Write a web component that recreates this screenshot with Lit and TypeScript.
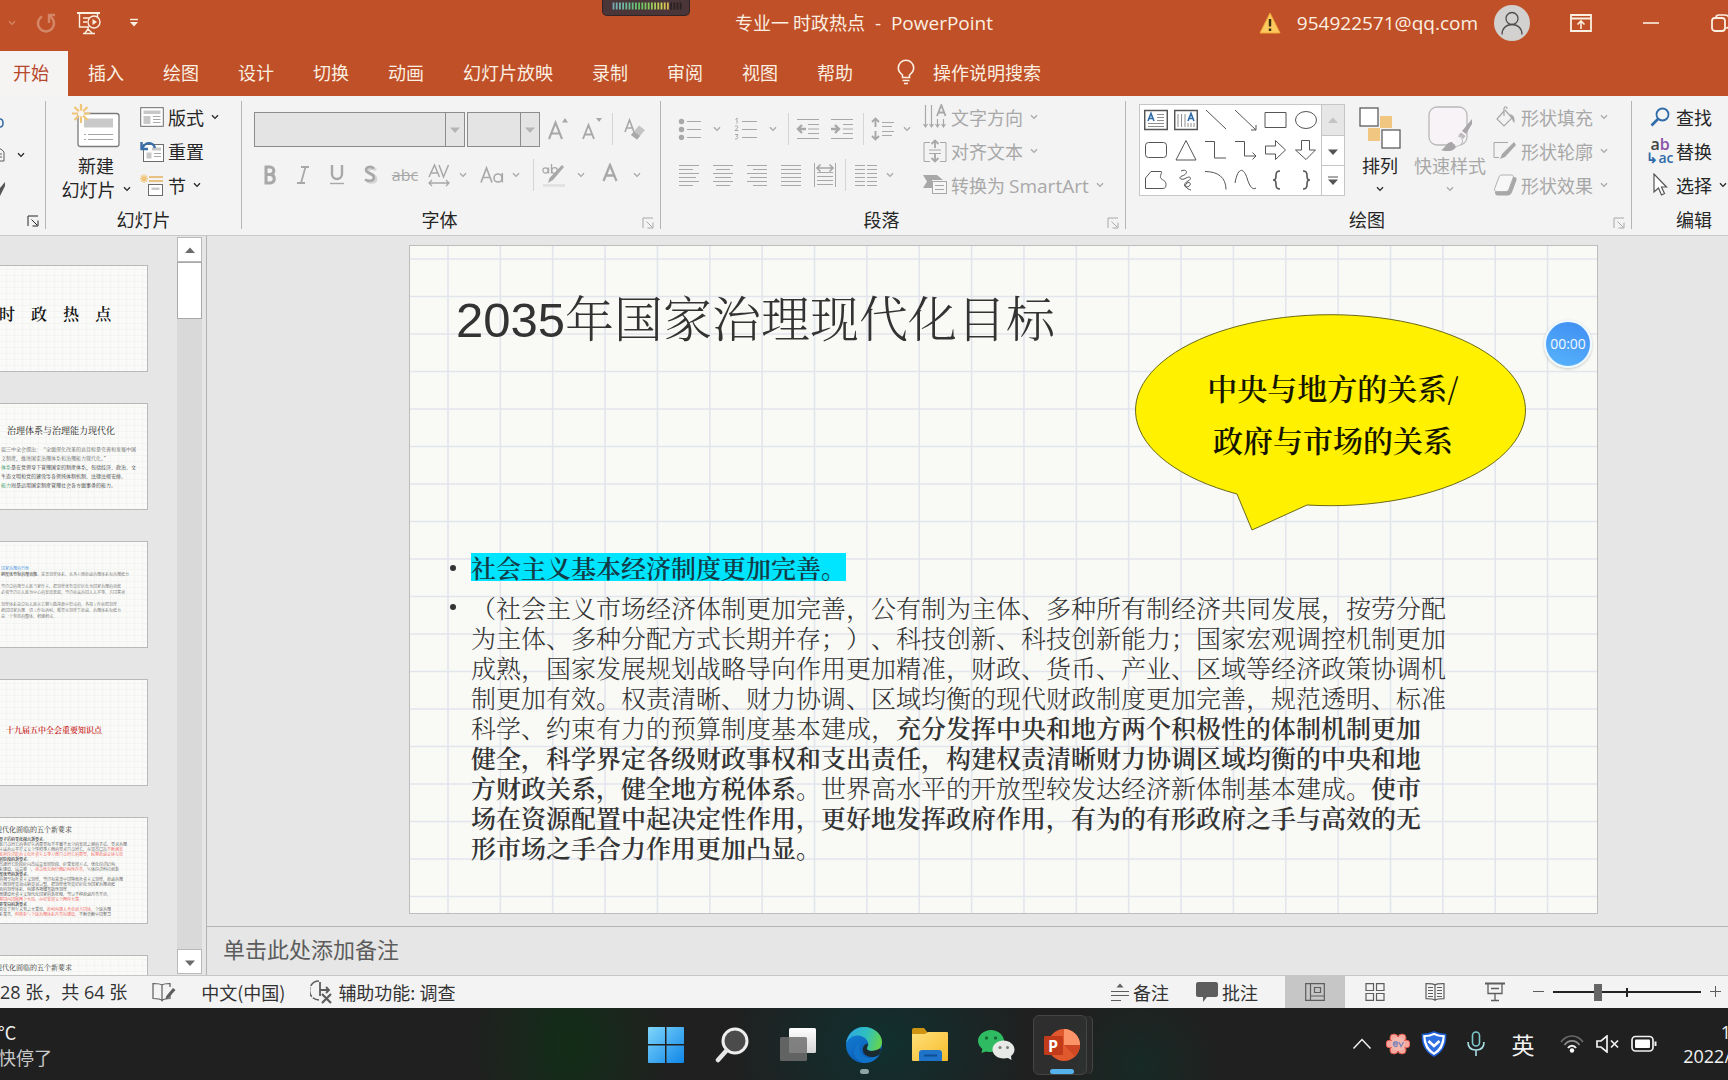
import { LitElement, html, svg, css, nothing, TemplateResult } from "lit";
import { customElement, state } from "lit/decorators.js";

type Pic = TemplateResult;

const pic = (w: number, h: number, body: unknown, cls = ""): Pic =>
  html`<svg class=${cls} width=${w} height=${h} viewBox="0 0 ${w} ${h}" fill="none" stroke="currentColor" aria-hidden="true">${body}</svg>`;

const chevron = pic(8, 6, svg`<path d="M1 1.200 4 4.400 7 1.200" stroke-width="1.300"/>`, "chev");

const launcherIcon = pic(12, 12, svg`<path d="M1 11V1h10M4.500 4.500 10 10M11 5.500V11H5.500"/>`);

/* horizontal rules of a paragraph icon: [x1, x2] for each line */
const lines = (rows: number[][], y0 = 1, step = 4) =>
  rows.map(([a, b], i) => svg`<path d="M${a} ${y0 + i * step + 0.5}H${b}"/>`);

const I = {
  redo: pic(20, 22, svg`<path d="M6 4.500A8 8 0 1 0 14 4.500M13 11V3H19" stroke-width="2.400"/>`),
  present: pic(26, 24, svg`<path d="M1 2h23" stroke-width="2"/><path d="M3.500 3v13H13M7 7h6M7 11h4M12 16v3M7 22.500h12M9 22l3-4 4 4M21.500 3v3" stroke-width="1.400"/><circle cx="18" cy="11" r="6" stroke-width="1.400"/><path d="M16.500 8v6l4.500-3z" fill="currentColor" stroke="none"/>`),
  more: pic(10, 9, svg`<path d="M1 1.500h8" stroke-width="1.400"/><path d="M1 4h8L5 8.500z" fill="currentColor" stroke="none"/>`),
  bulb: pic(20, 26, svg`<path d="M6.500 18.500v-2.500C4 14 2.300 12 2.300 9a7.700 7.700 0 0 1 15.400 0c0 3-1.700 5-4.200 7v2.500zM6.500 21.500h7M8 24.500h4" stroke-width="1.600"/>`),
  warn: pic(22, 22, svg`<path d="M11 1 21 21H1z" fill="#fbc95d" stroke="#f2a83a"/><path d="M11 7v7.500M11 16.500v2.500" stroke="#3d2a10" stroke-width="2.400"/>`),
  avatar: pic(36, 36, svg`<circle cx="18" cy="18" r="18" fill="#d3d1cf" stroke="none"/><circle cx="18" cy="13.500" r="6" stroke="#4d4d4d" stroke-width="1.300"/><path d="M8 29.500c0-6 4-10 10-10s10 4 10 10" stroke="#4d4d4d" stroke-width="1.300"/>`),
  ribbonOpt: pic(22, 18, svg`<path d="M1 1h20v16H1zM1 4.500h20" stroke-width="1.800"/><path d="M11 15V7.500M7.500 10.500 11 7l3.500 3.500" stroke-width="1.600"/>`),
  minimize: pic(16, 4, svg`<path d="M0 2h16" stroke-width="1.600"/>`),
  restore: pic(20, 18, svg`<rect x="1" y="4" width="13" height="13" rx="3" stroke-width="1.800"/><path d="M5 3.500C5 2 6 1 8 1h6c3 0 4 1 4 4v6c0 2-1 3-3 3" stroke-width="1.600"/>`),

  newSlide: pic(48, 44, svg`<rect x="6" y="9.500" width="41" height="33" rx="2.500" fill="#fff" stroke="#7b7b7b" stroke-width="1.300"/><path d="M12 14.500h29v9H12z" fill="#c9c9c9" stroke="none"/><path d="M12 30.500h2M16 30.500h25M12 35.500h2M16 35.500h25" stroke="#a5a5a5"/><path d="M9 0v19M0 9.500h18M2.500 3l13 13M15.500 3l-13 13" stroke="#f0c578" stroke-width="2.200"/><circle cx="9" cy="9.500" r="3" fill="#f6f6f6" stroke="none"/>`),
  layout: pic(24, 20, svg`<rect x=".7" y=".7" width="22.600" height="18.600" fill="#fff" stroke="#6c6c6c"/><path d="M3.500 3.500h17v3.500h-17zM3.500 9h7v8h-7z" fill="#c8c8c8" stroke="none"/><path d="M13 9.500h7.500M13 12.500h7.500M13 15.500h7.500" stroke="#a8a8a8"/>`),
  reset: pic(24, 22, svg`<rect x="3.500" y="4.500" width="20" height="17" fill="#fff" stroke="#6c6c6c"/><path d="M12 7.500h9v3h-9zM6.500 12.500h5v6h-5z" fill="#c8c8c8" stroke="none"/><path d="M14 13.500h7M14 16.500h7" stroke="#a8a8a8"/><path d="M15 8C13 2 6 1 2.500 8M1.500 2v7h6.500" stroke="#3a6ea8" stroke-width="2.400"/>`),
  section: pic(24, 22, svg`<path d="M4 0v9M0 4.500h8M1 1.500l6 6M7 1.500l-6 6" stroke="#f0c578" stroke-width="1.300"/><path d="M9 3h14M9 7h14" stroke="#e3b35c" stroke-width="1.500"/><rect x="8.500" y="10.500" width="14" height="11" fill="#fff" stroke="#6c6c6c"/><path d="M11.500 13.500h8v2.500h-8z" fill="#c8c8c8" stroke="none"/>`),

  grow: pic(20, 22, svg`<path d="M1 21 7.500 4.500 14 21M3.500 15.500h8" stroke-width="2.100"/><path d="M14 4.500h6L17 0z" fill="currentColor" stroke="none"/>`),
  shrink: pic(20, 22, svg`<path d="M1 21 6.500 7 12 21M3 16.500h7" stroke-width="1.900"/><path d="M14 0h6l-3 4z" fill="currentColor" stroke="none"/>`),
  eraser: pic(22, 22, svg`<path d="M1 14 5.500 2 10 14M2.500 10h6" stroke-width="1.600"/><path d="M15 7.500 21 12l-8 9.500-6-4.500z" fill="#c4c4c4" stroke="none"/><path d="M10 13.500l6 4.500-3 3.500-6-4.500z" fill="currentColor" stroke="none"/>`),
  bold: pic(14, 20, svg`<path d="M3 2v16h4.500a4.500 4.300 0 0 0 0-8.500H3h4a3.800 3.700 0 0 0 0-7.500z" stroke-width="3"/>`),
  italic: pic(14, 18, svg`<path d="M5 1h8M1 17h8M9.500 1 5 17" stroke-width="1.800"/>`),
  under: pic(16, 20, svg`<path d="M3 0v9a5 5 0 0 0 10 0V0" stroke-width="2.400"/><path d="M1 18.500h14" stroke-width="1.400"/>`),
  shadow: pic(18, 20, svg`<path d="M14 5c-3-2.500-8-2-8 1.500 0 4 8 2.500 8 7.500 0 4-6 4-9 2" stroke="#d6d6d6" stroke-width="3"/><path d="M12 3.500C9 1 4 1.500 4 5c0 4 8 2.500 8 7.500 0 4-6 4-9 2" stroke-width="2.600"/>`),
  spacing: pic(24, 24, svg`<path d="M2 14 7.500 2 12.500 14M4 10h7M12 2l4.500 12L21.500 2" stroke-width="1.500"/><path d="M2 20h20M5 17l-3 3 3 3M19 17l3 3-3 3" stroke-width="1.300"/>`),
  caseIcon: pic(24, 18, svg`<path d="M1 16.500 6.500 2 12 16.500M3 11.500h7" stroke-width="1.700"/><circle cx="18" cy="12" r="4" stroke-width="1.600"/><path d="M22.300 7v9.500" stroke-width="1.600"/>`),
  highlight: pic(24, 26, svg`<circle cx="3.500" cy="8.500" r="2.600" stroke-width="1.200"/><path d="M6.500 5.500v6M9.500 2v9.500" stroke-width="1.300"/><circle cx="12.500" cy="8.500" r="2.800" stroke-width="1.200"/><path d="M22 5 11 18l-5 3 1.500-5L20 3z" fill="currentColor" stroke="none"/><path d="M1 23.500h22" stroke="#e2e2e2" stroke-width="3"/>`),
  fontColor: pic(24, 24, svg`<path d="M5.500 18 12 2l6.500 16M8 12.500h8" stroke-width="2.300"/>`),

  bullets: pic(24, 22, svg`<path d="M9 3.500h14M9 11.500h14M9 19.500h14"/><g fill="currentColor" stroke="none"><circle cx="3.500" cy="3.500" r="2.700"/><circle cx="3.500" cy="11.500" r="2.700"/><circle cx="3.500" cy="19.500" r="2.700"/></g>`),
  numbers: pic(24, 24, svg`<path d="M8 4.500h15M8 12.500h15M8 20.500h15"/><path d="M1.500 2.500 3 1v5.500M1 9.500c2-1.500 3.500 0 2.500 1.500L1 13.500h3.500M1 17.500h3L2.500 19.500c2 0 2 3-1.500 2.500" />`),
  outdent: pic(24, 22, svg`<path d="M1 1.500h22M12 6.500h11M12 11h11M12 15.500h11M1 20.500h22"/><path d="M2 11h8M6 7l-4 4 4 4" stroke-width="2.400"/>`),
  indent: pic(24, 22, svg`<path d="M1 1.500h22M13 6.500h10M13 11h10M13 15.500h10M1 20.500h22"/><path d="M1 11h8M5 7l4 4-4 4" stroke-width="2.400"/>`),
  lineGap: pic(24, 24, svg`<path d="M11 5.500h12M11 9.500h10M11 14.500h12M11 18.500h10"/><path d="M4.500 1.500v8.500M1 5l3.500-3.500L8 5M4.500 22.500V14M1 19l3.500 3.500L8 19" stroke-width="1.900"/>`),
  alignL: pic(22, 22, lines([[1, 21], [1, 15], [1, 21], [1, 18], [1, 21], [1, 15]])),
  alignC: pic(22, 22, lines([[1, 21], [4, 18], [1, 21], [3, 19], [1, 21], [4, 18]])),
  alignR: pic(22, 22, lines([[1, 21], [7, 21], [1, 21], [4, 21], [1, 21], [7, 21]])),
  alignJ: pic(22, 22, lines([[1, 21], [1, 21], [1, 21], [1, 21], [1, 21], [1, 21]])),
  spread: pic(24, 24, svg`${lines([[4, 20], [4, 20], [4, 20], [4, 20]], 9)}<path d="M1.500 0v24M22.500 0v24"/><path d="M4 5h16M7.500 1.500 4 5l3.500 3.500M16.500 1.500 20 5l-3.500 3.500" stroke-width="1.700"/>`),
  columns: pic(24, 22, svg`${lines([[1, 11], [1, 11], [1, 11], [1, 11], [1, 11], [1, 11]])}${lines([[13, 23], [13, 23], [13, 23], [13, 23], [13, 23], [13, 23]])}`),
  textDir: pic(24, 26, svg`<path d="M2.500 1v22M8.500 1v22M14.500 15v8M20.500 15v8M.500 20l2 3 2-3M6.500 20l2 3 2-3M12.500 20l2 3 2-3M18.500 20l2 3 2-3" stroke-width="1.200"/><path d="M14 12l4.300-11L22.500 12M15.500 8.500h5.500" stroke-width="1.800"/>`),
  textAlign: pic(24, 24, svg`<path d="M7 3.500H1v19h6M17 3.500h6v19h-6M6 11h12M6 14.500h12"/><path d="M12 9V1.500M8.500 5 12 1.500 15.500 5M12 15v7.500M8.500 19l3.500 3.500 3.500-3.500" stroke-width="1.800"/>`),
  smartArt: pic(24, 20, svg`<path d="M0 0h14l6 5H9v8H0l4-6.500z" fill="currentColor" stroke="none"/><rect x="9.500" y="6.500" width="14" height="12" fill="#f5f5f5"/><path d="M12 10.500h9M12 14.500h9"/>`),

  arrange: pic(42, 42, svg`<path d="M21 9h12v12H21zM9 21h12v13H9z" fill="#f0c680" stroke="none"/><rect x="1" y="1" width="18" height="18" fill="#fff" stroke="#5d5d5d" stroke-width="1.300"/><rect x="23" y="23" width="18" height="18" fill="#fff" stroke="#5d5d5d" stroke-width="1.300"/>`),
  quick: pic(46, 46, svg`<rect x="2" y="2" width="38" height="38" rx="8" fill="#f7f3f7" stroke="#b9b9b9" stroke-width="1.300"/><path d="M45 14 35 26l4 3 6-10z" fill="#a9a6a9" stroke="none"/><path d="M34 27.500l4.500 3.500-2 3-5-4z" fill="#bdbabd" stroke="none"/><path d="M31 31c3 1 5 3 4.500 6-2 4-6 5-8 4" fill="#f3f3f3" stroke="#bdbabd"/><path d="M14 45c4-1 5-8 11-8l4 5c-3 5-10 5-15 3z" fill="#a9a6a9" stroke="none"/>`),
  fill: pic(24, 22, svg`<path d="M11 5 4 13l7 7 8-8-7-8M11 10V3c0-3 3-3 3 0" stroke-width="1.200"/><path d="M17 8c4 1 5 4 4.500 9-2-1-2-4-3.500-6z" fill="currentColor" stroke="none"/>`),
  outline: pic(24, 20, svg`<path d="M15 1.500H1v15h5"/><path d="M21 1 9 13l-2 5 5-2L23 4z" fill="currentColor" stroke="none"/>`),
  effect: pic(24, 22, svg`<path d="M9 3h12c2 0 3 1 2.500 3l-4 11c-1 3-3 4.500-5 4.500H5c-2 0-3-1-3-3z" fill="#a8a8a8" stroke="none"/><path d="M9 1h9c2 0 3 1 2 3l-4 11c-.500 1.500-1.500 2.500-3 2.500H4c-2 0-3-1-2.300-3L6 3c.500-1.300 1.500-2 3-2z" fill="#f7f7f7" stroke="#b1b1b1"/>`),
  find: pic(20, 20, svg`<circle cx="12.500" cy="7.500" r="6" stroke="#2f6ba8" stroke-width="1.800"/><path d="M8.500 11.500 1.500 18.500" stroke="#2f6ba8" stroke-width="2.600"/>`),
  replace: html`<span class="replace" aria-hidden="true"><span>a<i>b</i></span><span class="second">↳ac</span></span>`,
  select: pic(16, 24, svg`<path d="M2 1v18l4.500-4 3 7 3-1.500-3-6.500h5z" fill="#fff" stroke="#555" stroke-width="1.200"/>`),

  cut: pic(4, 10, svg`<path d="M0 1c2 0 3 2 3 4S2 9 0 9" stroke="#3a6ea8" stroke-width="1.600"/>`),
  copy: pic(5, 14, svg`<path d="M0 1h1l3 3v9H0M0 6h2M0 9h2" stroke="#5d5d5d"/>`),
  brush: pic(6, 16, svg`<path d="M5 0v4L0 14V6z" fill="#555" stroke="none"/>`),

  spell: pic(24, 20, svg`<path d="M10 3C8 1.500 5 1.500 1 1.500v15c4 0 7 0 9 2V3c2-1.500 5-1.500 8-1.500V5M10 18.500c2-2 5-2 8-2V13" stroke-width="1.200"/><path d="M21 6l2.500 2-7 8-3 1.500.8-3.500z" fill="currentColor" stroke="none"/>`),
  access: pic(24, 24, svg`<path d="M9 1A9.500 9.500 0 0 0 9 20" stroke-width="1.600" stroke-dasharray="10 1.500"/><path d="M10 2v8h9M16 7l3 3-3 3M10 10v6" stroke-width="1.800"/><path d="M12 14l9 9M21 14l-9 9" stroke-width="2.200"/>`),
  notes: pic(18, 20, svg`<path d="M5.500 5.500h7L9 1.500z" fill="currentColor" stroke="none"/><path d="M0 9.500h18M0 13.500h18M0 18.500h10" stroke-width="1.200"/>`),
  comment: pic(22, 20, svg`<path d="M2 0h18c1 0 2 1 2 2v11c0 1-1 2-2 2h-9l-4 5v-5H2c-1 0-2-1-2-2V2c0-1 1-2 2-2z" fill="#5d5d5d" stroke="none"/>`),
  viewNormal: pic(20, 18, svg`<path d="M.700.700h18.600v16.600H.700zM5.500 1v16M5.500 13h14M9.500 4.500h6v5h-6z" stroke-width="1.200"/>`),
  viewSorter: pic(20, 18, svg`<path d="M1 .700h7.500v6.800H1zM11.500.700H19v6.800h-7.500zM1 10.500h7.500v6.800H1zM11.500 10.500H19v6.800h-7.500z" stroke-width="1.200"/>`),
  viewRead: pic(20, 18, svg`<path d="M10 2C8 .500 4 .700 1 .700v15c3 0 7 0 9 1.500 2-1.500 6-1.500 9-1.500v-15c-3 0-7-.200-9 1.300zM10 2v15.500M3 4.500h5M3 7.500h5M3 10.500h5M3 13.500h5M12 4.500h5M12 7.500h5M12 10.500h5M12 13.500h5" stroke-width="1.200"/>`),
  viewShow: pic(20, 20, svg`<path d="M0 1.500h20" stroke-width="2"/><path d="M3 2v9.500h14V2M6 6.500h8M10 12v6.500M6 18.500h8" stroke-width="1.300"/>`),

  start: pic(36, 36, svg`<defs><linearGradient id="w" x1="0" y1="0" x2="1" y2="1"><stop stop-color="#7fd6fb"/><stop offset="1" stop-color="#0f86e8"/></linearGradient></defs><path d="M0 1q0-1 1-1h16v17H0zM18.500 0H35q1 0 1 1v16H18.500zM0 18.500h17V36H1q-1 0-1-1zM18.500 18.500H36V35q0 1-1 1H18.500z" fill="url(#w)" stroke="none"/>`),
  search: pic(34, 36, svg`<circle cx="20" cy="14" r="12" fill="#4b4b4b" stroke="#eee" stroke-width="3"/><path d="M11.500 23.500 3 33" stroke="#e6e6e6" stroke-width="4.500" stroke-linecap="round"/>`),
  tasks: pic(36, 34, svg`<defs><linearGradient id="t" x1="0" y1="0" x2="0" y2="1"><stop stop-color="#fff"/><stop offset="1" stop-color="#d4d4d4"/></linearGradient></defs><rect x="9" y="0" width="27" height="25" rx="1.500" fill="url(#t)" stroke="none"/><rect x="0" y="9" width="27" height="24" rx="1.500" fill="#6e6e6e" fill-opacity=".85" stroke="none"/>`),
  edge: pic(36, 36, svg`<defs><linearGradient id="e1" x1="0" y1=".3" x2="1" y2=".5"><stop stop-color="#2fa7e0"/><stop offset=".55" stop-color="#2fc0c0"/><stop offset="1" stop-color="#66d34c"/></linearGradient><linearGradient id="e2" x1="0" y1="0" x2=".6" y2="1"><stop stop-color="#1384d8"/><stop offset="1" stop-color="#0b59b4"/></linearGradient></defs><circle cx="18" cy="18" r="18" fill="url(#e2)" stroke="none"/><path d="M0 17C1 7 9 0 18 0c10 0 18 7 18 15 0 6-4 9-9 9-4 0-6-1-6-2.500S23 19 22 15.500C20 10 15 8.500 11 8.500 6 8.500 2 12 0 17z" fill="url(#e1)" stroke="none"/><path d="M16 14.500c-4 4-3.500 10 1 14 4 3 9 3 16.500-.500C30 33 25 36 18 36 10 34 7 28 8.500 22c1-4 4-6.500 7.500-7.500z" fill="#1173c9" stroke="none"/><path d="M21.500 16.500c1 2.500-1 3.500-.500 5.500 1 3 8 2.500 13-.500 2 0 1 3-1 6-5 4-12 3-15-1-2.500-4-1-9 3.500-10z" fill="#1b2a2e" stroke="none"/>`),
  folder: pic(38, 36, svg`<defs><linearGradient id="f" x1="0" y1="0" x2="1" y2="1"><stop stop-color="#ffe07a"/><stop offset="1" stop-color="#f7bb2b"/></linearGradient></defs><path d="M1 3q0-2 2-2h10l4 5-4 4H1z" fill="#cf9412" stroke="none"/><path d="M1 7h13l3-2h19q1 0 1 1v27q0 1-1 1H2q-1 0-1-1z" fill="url(#f)" stroke="none"/><path d="M8 34V26q0-3 3-3h17q3 0 3 3v8z" fill="#1f74c9" stroke="none"/><path d="M13 28.500h13" stroke="#0f4f95" stroke-width="2"/>`),
  wechat: pic(38, 32, svg`<path d="M14 1c7 0 13 5 13 11s-5 11-13 11c-2 0-3 0-5-.600L4.500 24l.800-4C3 18 1 15 1 12 1 6 7 1 14 1z" fill="#2fbb61" stroke="none"/><path d="M26.500 11.500c6 0 11 4 11 9 0 3-1.500 5-3.500 6.500l.500 4-3.500-2c-9 2-15.500-2.500-15.500-8.500 0-5 5-9 11-9z" fill="#e6e9e6" stroke="none"/><g fill="#176e37" stroke="none"><circle cx="9.500" cy="9" r="1.700"/><circle cx="18.500" cy="9" r="1.700"/></g><g fill="#757a76" stroke="none"><circle cx="23" cy="18.500" r="1.500"/><circle cx="30.500" cy="18.500" r="1.500"/></g>`),
  ppt: html`<span class="ppt">${pic(36, 34, svg`<circle cx="20" cy="17" r="16" fill="#e0582d" stroke="none"/><path d="M20 1a16 16 0 0 1 16 16H20z" fill="#fb9469" stroke="none"/><path d="M20 17h16a16 16 0 0 1-5 11.500z" fill="#cf4723" stroke="none"/><rect x="0" y="8" width="19" height="19" rx="1.500" fill="#c23b1b" stroke="none"/>`)}<span>P</span></span>`,

  up: pic(20, 12, svg`<path d="M1.500 10.500 10 1.500l8.500 9" stroke-width="1.500"/>`),
  flower: pic(24, 22, svg`<g fill="#f3a9a0" stroke="#e0574e"><circle cx="8" cy="5" r="4"/><circle cx="16" cy="5" r="4"/><circle cx="20" cy="11" r="4"/><circle cx="16" cy="17" r="4"/><circle cx="8" cy="17" r="4"/><circle cx="4" cy="11" r="4"/></g><circle cx="12" cy="11" r="7" fill="#f5b8b0" stroke="none"/><path d="M7.500 11h4c0-3-4-3-4 0s3 3 4 1.500M13 9l2 4.500L17.500 9" stroke="#7f86b8" stroke-width="1.400"/>`),
  shield: pic(26, 26, svg`<path d="M13 1c4 2 7 2.500 11.500 2.500C25 13 21 21 13 25 5 21 1 13 1.500 3.500 6 3.500 9 3 13 1z" fill="#fff" stroke="#1f5fd8" stroke-width="1.500"/><path d="M13 4c3 1.300 5 1.800 8.500 2-.5 6.500-3.300 12-8.500 15.500C7.800 18 5 12.500 4.500 6 8 5.800 10 5.300 13 4z" fill="#2d6fe0" stroke="none"/><path d="M7.500 10 13 15l5.500-5" stroke="#fff" stroke-width="2.600"/>`),
  mic: pic(18, 26, svg`<rect x="5.500" y="1" width="7" height="14" rx="3.500" stroke="#7cc7c9" stroke-width="1.600"/><path d="M1 11c0 5 3 8 8 8s8-3 8-8M9 19v6" stroke="#a9dfe6" stroke-width="1.600"/>`),
  wifi: pic(24, 20, svg`<path d="M1 8C7 0 17 0 23 8" stroke="#6b6b6b" stroke-width="1.700"/><path d="M4.500 11c4-5.500 11-5.500 15 0" stroke="#8f8f8f" stroke-width="1.700"/><path d="M8 14c2-3 6-3 8 0" stroke-width="2"/><circle cx="12" cy="16.500" r="2.200" fill="#fff" stroke="none"/>`),
  mute: pic(24, 18, svg`<path d="M1 6h4l6-5v16l-6-5H1zM15 5.500l7 7M22 5.500l-7 7" stroke-width="1.700"/>`),
  battery: pic(26, 18, svg`<rect x="1" y="1.500" width="21" height="14.500" rx="3.500" stroke-width="1.700"/><rect x="4" y="4.500" width="15" height="8.500" rx="1" fill="#fff" stroke="none"/><path d="M24.500 6.500v4.500" stroke-width="2"/>`),
};

const shape = (body: unknown) => pic(24, 22, body, "shape");
const shapes: [string, Pic][] = [
  ["文本框", shape(svg`<rect x=".700" y="1.500" width="22.600" height="19" stroke-width="1.500"/><path d="M4 12 7 4.500 10 12M5 9.500h4" stroke="#2f6ba8" stroke-width="1.600"/><path d="M13 5.500h7M13 8.500h7M13 11.500h7M4 14.500h16M4 17.500h16" stroke="#8f8f8f"/>`)],
  ["竖排文本框", shape(svg`<rect x=".700" y="1.500" width="22.600" height="19" stroke-width="1.500"/><path d="M14 12 17 4.500 20 12M15 9.500h4" stroke="#2f6ba8" stroke-width="1.600"/><path d="M4 5v13M7.500 5v13M11 5v13M14 14v4M17 14v4M20 14v4" stroke="#8f8f8f"/>`)],
  ["直线", shape(svg`<path d="M2 1l20 19"/>`)],
  ["箭头", shape(svg`<path d="M1 1l21 20M22 16v5h-5"/>`)],
  ["矩形", shape(svg`<path d="M1 3.500h21v15H1z"/>`)],
  ["椭圆", shape(svg`<ellipse cx="12" cy="11" rx="10.500" ry="8.500"/>`)],
  ["圆角矩形", shape(svg`<rect x="1.500" y="3.500" width="21" height="15" rx="3"/>`)],
  ["三角形", shape(svg`<path d="M12 1.500 22 21H2z"/>`)],
  ["肘形连接符", shape(svg`<path d="M1 2.500h9.500V19H22"/>`)],
  ["肘形箭头", shape(svg`<path d="M1 2.500h9.500V17H22M18.500 13.500 22 17l-3.500 3.500"/>`)],
  ["右箭头", shape(svg`<path d="M1.500 7h10V1.500L21.500 11l-10 9.500V15h-10z"/>`)],
  ["下箭头", shape(svg`<path d="M7.500 1.500h8V11h6L12 20.500 1.500 11h6z"/>`)],
  ["任意多边形", shape(svg`<path d="M7 2.500h10c2 0-2 5 0 7s5 2 5 6-2 4-5 4H1.500V9z"/>`)],
  ["自由曲线", shape(svg`<path d="M7 2c6-3 8 3 1 5-5 2 0 5 4 2 6-3 5 2 2 3-4 2-5 6-1 6 5-1 4-6 0-4-3 2-1 6 4 7"/>`)],
  ["弧形", shape(svg`<path d="M1 2.500c13 0 21 6 21 18"/>`)],
  ["曲线", shape(svg`<path d="M1 14C4-3 10-1 13 9s6 12 9 10"/>`)],
  ["左大括号", shape(svg`<path d="M16 2c-3 0-4 1-4 4s0 5-3 5c3 0 3 2 3 5s1 4 4 4" stroke-width="1.600"/>`)],
  ["右大括号", shape(svg`<path d="M9 2c3 0 4 1 4 4s0 5 3 5c-3 0-3 2-3 5s-1 4-4 4" stroke-width="1.600"/>`)],
];

const tri = (up: boolean, bar = false) =>
  pic(12, 10, svg`${bar ? svg`<path d="M1 1h10"/>` : nothing}<path d=${up ? "M1 8h10L6 2.500z" : "M1 3.500h10L6 9z"} fill="currentColor" stroke="none"/>`);

@customElement("app-root")
export class AppRoot extends LitElement {
  static styles = css`
    :host {
      display: flex;
      flex-direction: column;
      height: 100vh;
      overflow: hidden;
      color: #262626;
      background: #e6e6e6;
      font: 300 18px/24px "Noto Sans CJK SC", sans-serif;
      --ui-latin: "Open Sans", "Noto Sans CJK SC", sans-serif;
      --song: "Noto Serif CJK SC", "Noto Sans CJK SC", serif;
    }
    * { box-sizing: border-box; }
    svg { display: block; flex: none; }
    button, select, input, textarea {
      margin: 0; padding: 0; border: 0; background: none;
      color: inherit; font: inherit;
    }
    button { display: flex; align-items: center; justify-content: center; white-space: nowrap; }
    .off { color: #a8a8a8; }

    /* title bar */
    .title {
      display: grid; grid-template-columns: 1fr auto 1fr; align-items: center;
      height: 51px; padding-bottom: 6px; flex: none;
      color: #fbefe2; background: #c05027;
    }
    .quick { display: flex; align-items: center; gap: 20px; padding-left: 8px; }
    .quick .faded { opacity: .35; }
    .quick .last { padding-left: 7px; }
    .title h1 { margin: 0; font: inherit; font-weight: 400; white-space: pre; }
    .latin { font-family: var(--ui-latin); font-size: 19px; font-weight: 400; }
    .account { display: flex; align-items: center; justify-content: flex-end; margin-right: -28px; }
    .mail { font-family: var(--ui-latin); font-size: 19px; font-weight: 400; margin: 0 16px; }
    .account .win { width: 70px; height: 36px; }
    .account .win.first { margin-left: 16px; }
    .meter {
      position: absolute; left: 602px; top: 0; width: 88px; height: 16px;
      border-radius: 0 0 5px 5px; background: #4a3538;
      border: 1px solid #2f2326; border-top: 0; overflow: hidden;
    }

    .tabs {
      display: flex; align-items: stretch; height: 45px; flex: none;
      margin: 0; padding: 0; color: #fbefe2; background: #c05027;
    }
    .tabs button { padding: 0 19px 4px 20px; font-weight: 400; }
    .tabs button.on { margin-left: -7px; color: #b7472a; background: #f5f4f3; }
    .tabs .tell { gap: 17px; padding-left: 24px; }

    /* ribbon */
    .ribbon { display: flex; height: 140px; flex: none; background: #f3f3f3; border-bottom: 1px solid #c8c8c8; overflow: hidden; }
    .group { display: flex; flex-direction: column; flex: none; margin: 5px 0 6px; border-right: 1px solid #b5b5b5; }
    .group.clip { width: 46px; }
    .group.slides { width: 196px; }
    .group.font { width: 419px; }
    .group.para { width: 465px; }
    .group.draw { width: 506px; }
    .group.edit { width: 100px; border: 0; }
    .body { flex: 1; display: flex; min-height: 0; }
    .label { display: grid; grid-template-columns: 1fr 23px; align-items: center; height: 22px; padding-bottom: 4px; text-align: center; font-weight: 400; }
    .label.wide { grid-template-columns: 1fr; }
    .label button { justify-self: start; padding: 8px 0 0 5px; }
    .list { display: grid; grid-template-rows: repeat(3, 34px); justify-items: start; margin-top: -1px; }
    .list button { gap: 4px; font-weight: 400; }
    .list button .chev { margin-left: 3px; }
    .list .ico { width: 24px; display: flex; justify-content: center; }
    .big { flex-direction: column; justify-content: flex-start; padding-top: 2px; font-weight: 400; }
    .big .ico { height: 50px; display: flex; align-items: center; }
    .big .cap { display: flex; align-items: center; gap: 7px; height: 24px; }
    .slides .big { width: 88px; margin-left: 6px; }
    .slides .big .ico { height: 46px; margin-bottom: 4px; }
    .draw .big { width: 70px; }

    .rows { display: grid; grid-template-rows: 46px 46px; padding-top: 5px; }
    .row { display: grid; align-items: center; justify-items: center; }
    .font .rows { padding-left: 12px; }
    .font .r1 { grid-template-columns: 213px 73px 36px 32px 8px 37px; }
    .font .r2 { grid-template-columns: 32px repeat(4, 34px) 50px 56px 10px 50px 62px; }
    .para .rows { padding-left: 11px; }
    .para .r1 { grid-template-columns: 55px 56px 10px 30px 38px 4px 51px; }
    .para .r2 { grid-template-columns: repeat(5, 34px) 7px 50px; }
    .para .list { margin-left: 7px; }
    .row button { gap: 8px; }
    .row .far { gap: 11px; }
    .row .sep { width: 1px; height: 32px; background: #d5d5d5; }
    .row .strike { font: 400 16px/24px var(--ui-latin); text-decoration: line-through; }
    .combo { display: flex; justify-self: start; height: 35px; border: 1px solid #8c8c8c; background: #e4e4e4; color: #b5b5b5; }
    .combo.name { width: 211px; }
    .combo.size { width: 73px; }
    .combo select { flex: 1; min-width: 0; appearance: none; opacity: 1; }
    .combo span { display: flex; align-items: center; justify-content: center; width: 19px; border-left: 1px solid #8c8c8c; pointer-events: none; }

    .gallery { display: grid; grid-template-columns: 1fr 23px; width: 206px; height: 92px; margin: 3px 0 0 13px; border: 1px solid #c6c6c6; background: #fff; color: #555; }
    .gallery .cells { display: grid; grid-template-columns: repeat(6, 30px); grid-auto-rows: 30px; padding-left: 1px; }
    .gallery .scroll { display: grid; grid-template-rows: 1fr 1fr 1fr; border-left: 1px solid #c6c6c6; }
    .gallery .scroll button + button { border-top: 1px solid #c6c6c6; }
    .gallery .scroll .dim { background: #e6e6e6; color: #c3c3c3; }
    .draw .list { margin-left: 8px; }
    .edit .list { padding-left: 16px; }
    .edit .label { padding-left: 44px; text-align: left; }
    .replace { display: flex; flex-direction: column; font: 600 16px/13px var(--ui-latin); color: #444; }
    .replace i { font-style: normal; color: #8a50a8; }
    .replace .second { color: #2f6ba8; font-size: 14px; }
    .clip .body { flex-direction: column; padding-top: 17px; gap: 20px; }
    .clip .pair { display: flex; align-items: center; gap: 12px; }
    .clip .body button { justify-content: flex-start; }

    /* workspace */
    .work { display: grid; grid-template-columns: 207px minmax(0, 1fr); flex: 1; min-height: 0; }
    .nav { display: flex; min-height: 0; padding: 1px 4px 1px 0; border-right: 1px solid #b3b3b3; }
    .thumbs { flex: 1; display: flex; flex-direction: column; gap: 31px; min-height: 0; overflow: hidden; padding-top: 28px; margin-bottom: -1px; }
    .thumb {
      flex: none; width: 190px; height: 107px; margin-left: -42px; padding-left: 42px;
      border: 1px solid #b9b9b9; overflow: hidden; white-space: nowrap; color: #333;
      font: 400 5px/9px var(--song);
      background:
        repeating-linear-gradient(0deg, transparent 0 5px, #eef0ee88 5px 6px),
        repeating-linear-gradient(90deg, transparent 0 7px, #eef0ee88 7px 8px), #fafbf8;
    }
    .thumb p { margin: 0; }
    .t1 { padding: 36px 0 0 40px; font: 600 16px/24px var(--song); word-spacing: 12px; color: #111; }
    .t2 h2 { margin: 20px 0 6px 6px; font: 400 9px/14px var(--song); color: #222; }
    .t2 .pale { color: #666; }
    .t3 { padding-top: 23px; font-size: 4px; line-height: 6px; color: #666; }
    .t3 p { margin-bottom: 6px; }
    .t4 { padding: 40px 0 0 47px; color: #c8231c; font-weight: 600; font-size: 8px; line-height: 20px; }
    .t5 { font-size: 4px; line-height: 5px; padding-left: 36px; color: #444; }
    .t5 h2 { margin: 5px 0 2px; font: 400 7px/12px var(--song); color: #333; }
    .blue { color: #2c86dc; }
    .green { color: #2f8f5a; }
    .red { color: #ef4a45; }
    .bar { display: flex; flex-direction: column; width: 25px; flex: none; background: #d9d9d9; color: #6b6b6b; }
    .bar button { height: 25px; background: #fff; border: 1px solid #b9b9b9; }
    .bar .grip { height: 57px; background: #fff; border: 1px solid #a9a9a9; }
    .bar .room { flex: 1; }

    .main { display: flex; flex-direction: column; min-width: 0; min-height: 0; }
    .stage { flex: 1; display: flex; justify-content: center; min-height: 0; padding: 9px 0 12px 72px; }
    .slide { position: relative; height: 100%; aspect-ratio: 1189 / 669; flex: none; display: flex; flex-direction: column; background: #f9faf6; color: #333; font-family: var(--song); text-spacing-trim: space-all; }
    .grid { position: absolute; inset: 0; width: 100%; height: 100%; }
    .slide h2 { position: relative; margin: 45px 0 0 47px; font: 300 49px/60px "Liberation Sans", var(--song); }
    .slide ul { position: relative; margin: 203px 0 0 41px; padding: 0; list-style: none; font-size: 25px; line-height: 30px; white-space: nowrap; }
    .slide li { display: flex; gap: 15px; }
    .slide li::before { content: ""; flex: none; width: 6px; height: 6px; margin-top: 12px; border-radius: 50%; background: #333; }
    .slide li:first-child { line-height: 28px; margin-bottom: 11px; }
    .slide mark { background: #00e5ff; color: #123c48; font-weight: 600; }
    .slide b { font-weight: 600; }
    .slide .ln { display: block; }
    .callout { position: absolute; left: 728px; top: 70px; width: 392px; height: 217px; }
    .callout svg { position: absolute; inset: 0; overflow: visible; }
    .callout p { position: relative; margin: 0; padding-top: 46px; text-align: center; font-size: 30px; line-height: 52px; font-weight: 600; color: #141400; }
    .timer {
      position: absolute; left: 1135px; top: 75px; width: 48px; height: 48px; border-radius: 50%;
      border: 2px solid #eef8ff; background: linear-gradient(200deg, #3f8df3, #58b4fb);
      color: #f2f9ff; font: 400 14px/20px var(--ui-latin); box-shadow: 0 1px 3px #0003;
    }
    .notes { display: flex; flex: none; height: 49px; border-top: 1px solid #b3b3b3; }
    .notes textarea { flex: 1; resize: none; padding: 6px 16px; font: 400 22px/30px "Noto Sans CJK SC", sans-serif; overflow: hidden; }
    .notes textarea::placeholder { color: #5c5c5c; opacity: 1; }

    /* status bar */
    .status { display: flex; align-items: center; justify-content: space-between; height: 33px; flex: none; border-top: 1px solid #c6c6c6; background: #f3f3f3; color: #333; font-weight: 400; }
    .status .side { display: flex; align-items: center; height: 100%; white-space: nowrap; }
    .status .left { gap: 25px; }
    .status .page { font-family: var(--ui-latin); }
    .status button { gap: 4px; }
    .status svg { color: #5d5d5d; }
    .status .cmd { gap: 4px; margin-right: 27px; }
    .status .view { width: 60px; height: 100%; }
    .status .view.on { background: #c6c6c6; }
    .zoom { display: flex; align-items: center; gap: 9px; margin: 0 7px 0 8px; color: #444; }
    .zoom .rail { display: flex; background: linear-gradient(#222, #222) center / 2px 9px no-repeat; }
    .zoom input { appearance: none; width: 148px; height: 20px; background: linear-gradient(#222, #222) center / 100% 2px no-repeat; }
    .zoom input::-webkit-slider-thumb { appearance: none; width: 8px; height: 17px; background: #666; }

    /* taskbar */
    .task {
      display: grid; grid-template-columns: 1fr auto 1fr; align-items: center; height: 72px; flex: none;
      color: #f1f1f1; font-weight: 400;
      background:
        radial-gradient(ellipse 100px 140px at 570px 50%, #122d17, transparent),
        radial-gradient(ellipse 150px 120px at 880px 50%, #10302f, transparent),
        radial-gradient(ellipse 80px 80px at 1140px 80%, #172a25, transparent), #202020;
    }
    .weather { align-items: flex-start; flex-direction: column; margin-left: -2px; padding-top: 2px; justify-self: start; line-height: 25px; }
    .weather span:last-child { color: #c9c9c9; }
    .apps { display: flex; height: 72px; }
    .apps button { position: relative; width: 66px; height: 72px; padding-top: 2px; }
    .apps .run::after { content: ""; position: absolute; left: 29px; bottom: 6px; width: 9px; height: 5px; border-radius: 3px; background: #8fa5a5; }
    .apps .now::before { content: ""; position: absolute; inset: 7px 8px 5px 4px; border: 1px solid #444; border-radius: 6px; background: #fff1; box-shadow: 6px 0 0 -1px #2a2a2a, 7px 0 0 -1px #444; }
    .apps .now::after { left: 21px; width: 24px; background: #55b2ea; }
    .ppt { display: grid; position: relative; }
    .ppt > * { grid-area: 1 / 1; }
    .ppt span { padding: 9px 0 0 4px; text-align: left; color: #fff; font: 700 16px/18px var(--ui-latin); }
    .tray { display: flex; align-items: center; justify-content: flex-end; height: 100%; }
    .tray button { height: 40px; }
    .tray .b { width: 36px; }
    .tray .wide { width: 48px; }
    .tray .ime { width: 46px; margin-right: 8px; font-size: 23px; }
    .tray .clock { flex-direction: column; align-items: flex-end; width: 52px; height: auto; margin: 0 -3px 0 17px; font: 400 18px/24px var(--ui-latin); }
  `;

  @state() private tab = "开始";
  @state() private view = 0;

  private small(icon: unknown, text: string, arrow = false, off = false) {
    return html`<button class=${off ? "off" : ""} ?disabled=${off}><span class="ico">${icon}</span>${text}${arrow ? chevron : nothing}</button>`;
  }

  private tool(name: string, icon: unknown, arrow = false, cls = "") {
    return html`<button class="off ${cls}" disabled aria-label=${name}>${icon}${arrow ? chevron : nothing}</button>`;
  }

  private label(text: string, off = true) {
    return html`<div class="label"><span>${text}</span><button class=${off ? "off" : ""} aria-label="${text}设置">${launcherIcon}</button></div>`;
  }

  private titleBar() {
    const bars = Array.from({ length: 22 }, (_, i) => i);
    const tone = (i: number) => (i > 17 ? "#2b2226" : `hsl(${190 - i * 8.5} ${28 + i * 2}% 58%)`);
    return html`<header class="title">
        <div class="quick">
          <span class="faded">${chevron}</span>
          <button class="faded" aria-label="恢复">${I.redo}</button>
          <button aria-label="从头开始">${I.present}</button>
          <button class="last" aria-label="自定义快速访问工具栏">${I.more}</button>
        </div>
        <h1>专业一 时政热点<span class="latin">  -  PowerPoint</span></h1>
        <div class="account">
          ${I.warn}<span class="mail">954922571@qq.com</span>
          <button aria-label="账户">${I.avatar}</button>
          <button class="win first" aria-label="功能区显示选项">${I.ribbonOpt}</button>
          <button class="win" aria-label="最小化">${I.minimize}</button>
          <button class="win" aria-label="还原">${I.restore}</button>
        </div>
      </header>
      <div class="meter">${pic(88, 16, bars.map((i) => svg`<path d="M${10.5 + i * 3.2} 2.500V9.500" stroke=${tone(i)} stroke-width="1.800"/>`))}</div>`;
  }

  private tabBar() {
    const names = ["开始", "插入", "绘图", "设计", "切换", "动画", "幻灯片放映", "录制", "审阅", "视图", "帮助"];
    return html`<nav class="tabs">
      ${names.map((n) => html`<button class=${n === this.tab ? "on" : ""} @click=${() => (this.tab = n)}>${n}</button>`)}
      <button class="tell">${I.bulb}操作说明搜索</button>
    </nav>`;
  }

  private ribbon() {
    return html`<section class="ribbon">
      <div class="group clip">
        <div class="body">
          <button aria-label="剪切">${I.cut}</button>
          <button class="pair" aria-label="复制">${I.copy}${chevron}</button>
          <button aria-label="格式刷">${I.brush}</button>
        </div>
        ${this.label("", false)}
      </div>
      <div class="group slides">
        <div class="body">
          <button class="big"><span class="ico">${I.newSlide}</span><span class="cap">新建</span><span class="cap">幻灯片${chevron}</span></button>
          <div class="list">${this.small(I.layout, "版式", true)}${this.small(I.reset, "重置")}${this.small(I.section, "节", true)}</div>
        </div>
        <div class="label wide">幻灯片</div>
      </div>
      <div class="group font">
        <div class="body"><div class="rows">
          <div class="row r1">
            <div class="combo name"><select disabled aria-label="字体"></select><span>${tri(false)}</span></div>
            <div class="combo size"><select disabled aria-label="字号"></select><span>${tri(false)}</span></div>
            ${this.tool("增大字号", I.grow)}${this.tool("减小字号", I.shrink)}<i class="sep"></i>${this.tool("清除格式", I.eraser)}
          </div>
          <div class="row r2">
            ${this.tool("加粗", I.bold)}${this.tool("倾斜", I.italic)}${this.tool("下划线", I.under)}${this.tool("阴影", I.shadow)}
            ${this.tool("删除线", html`<span class="strike">abc</span>`)}
            ${this.tool("字符间距", I.spacing, true)}${this.tool("更改大小写", I.caseIcon, true)}<i class="sep"></i>
            ${this.tool("突出显示", I.highlight, true, "far")}${this.tool("字体颜色", I.fontColor, true, "far")}
          </div>
        </div></div>
        ${this.label("字体")}
      </div>
      <div class="group para">
        <div class="body">
          <div class="rows">
            <div class="row r1">
              ${this.tool("项目符号", I.bullets, true, "far")}${this.tool("编号", I.numbers, true, "far")}<i class="sep"></i>
              ${this.tool("减少缩进", I.outdent)}${this.tool("增加缩进", I.indent)}<i class="sep"></i>${this.tool("行距", I.lineGap, true)}
            </div>
            <div class="row r2">
              ${this.tool("左对齐", I.alignL)}${this.tool("居中", I.alignC)}${this.tool("右对齐", I.alignR)}${this.tool("两端对齐", I.alignJ)}${this.tool("分散对齐", I.spread)}
              <i class="sep"></i>${this.tool("分栏", I.columns, true)}
            </div>
          </div>
          <div class="list">
            ${this.small(I.textDir, "文字方向", true, true)}${this.small(I.textAlign, "对齐文本", true, true)}
            <button class="off" disabled><span class="ico">${I.smartArt}</span><span>转换为 <span class="latin">SmartArt</span></span>${chevron}</button>
          </div>
        </div>
        ${this.label("段落")}
      </div>
      <div class="group draw">
        <div class="body">
          <div class="gallery">
            <div class="cells">${shapes.map(([n, p]) => html`<button aria-label=${n}>${p}</button>`)}</div>
            <div class="scroll"><button class="dim" aria-label="上一行">${tri(true)}</button><button aria-label="下一行">${tri(false)}</button><button aria-label="其他">${tri(false, true)}</button></div>
          </div>
          <button class="big"><span class="ico">${I.arrange}</span><span class="cap">排列</span><span class="cap">${chevron}</span></button>
          <button class="big off" disabled><span class="ico">${I.quick}</span><span class="cap">快速样式</span><span class="cap">${chevron}</span></button>
          <div class="list">${this.small(I.fill, "形状填充", true, true)}${this.small(I.outline, "形状轮廓", true, true)}${this.small(I.effect, "形状效果", true, true)}</div>
        </div>
        ${this.label("绘图")}
      </div>
      <div class="group edit">
        <div class="body"><div class="list">${this.small(I.find, "查找")}${this.small(I.replace, "替换")}${this.small(I.select, "选择", true)}</div></div>
        <div class="label wide"><span>编辑</span></div>
      </div>
    </section>`;
  }

  private thumbnails() {
    return html`<div class="thumbs">
      <div class="thumb t1">时 政 热 点</div>
      <div class="thumb t2"><h2>治理体系与治理能力现代化</h2>
        <p class="pale">届三中全会提出：“全面深化改革的总目标是完善和发展中国</p><p class="pale">义制度，推进国家治理体系和治理能力现代化。”</p>
        <p><span class="green">体系</span>是在党领导下管理国家的制度体系，包括经济、政治、文</p><p>生态文明和党的建设等各领域体制机制、法律法规安排。</p>
        <p><span class="green">能力</span>则是运用国家制度管理社会各方面事务的能力。</p></div>
      <div class="thumb t3"><span class="blue">国家治理的目标</span>
        <p><b>制度优势和治理效能。</b>完善制度体系，从各方面推进治理体系和治理能力</p>
        <p>坚持党的领导人民当家作主，把制度优势更好转化为国家治理的效能<br />必须坚持以人民为中心的发展思想，坚持依法治国人人平等，共同富裕</p>
        <p>制度体系是党和人民在长期实践探索中形成的，各项工作依照制度<br />我国国家治理一切工作和活动，都要在制度下推进，治理体系和能力<br />是一个有机的整体，相辅相成。</p></div>
      <div class="thumb t4">十九届五中全会重要知识点</div>
      <div class="thumb t5"><h2>现代化面临的五个新要求</h2>
        <p><b>主要矛盾的变化提出新要求。</b><br />人民日益增长的美好生活需要和不平衡不充分的发展之间的矛盾，要求治理<br />民主法治公平正义安全环境等方面的要求日益增长，在更高层次<span class="red">不断满足</span><br /><span class="red">人民对经济政治文化社会生态等方面日益增长的需要，统筹推进总体布局</span></p>
        <p><b>发展阶段的新要求。</b><br />由高速增长阶段转向高质量发展阶段，转变发展方式，优化经济结构。<br />体系建设，质量第一，<span class="red">效益优先供给侧结构性改革，</span>实体经济科技创新</p>
        <p><b>制度优势的新要求。</b><br />党的领导和社会主义制度，坚持和完善中国特色社会主义制度，推进治理<br />各方面制度更加成熟更加定型，把制度优势更好转化为国家治理效能<br />有效的制度体系，构建各领域基础性制度。</p>
        <p>全面建设社会主义现代化国家的新征程，坚定不移推进改革开放，<br /><span class="red">统筹国内国际两个大局，办好发展安全两件大事。</span></p>
        <p><b>世界变局的新要求</b><br />世界处于百年未有之大变局，<span class="red">推动构建人类命运共同体，</span>全球治理<br />体系变革，<span class="red">积极参与全球治理体系改革和建设，</span>不断贡献中国智慧</p></div>
      <div class="thumb t5"><h2>现代化面临的五个新要求</h2></div>
    </div>`;
  }

  private slide() {
    const cols = Array.from({ length: 22 }, (_, i) => 39 + i * 52.36);
    const rows = Array.from({ length: 18 }, (_, i) => 14 + i * 37.5);
    return html`<article class="slide">
      <svg class="grid" viewBox="0 0 1189 669" preserveAspectRatio="none" fill="none" aria-hidden="true">
        <g stroke="#e3e5ed" stroke-width="1.600">
          ${cols.map((x) => svg`<path d="M${x} 1V668"/>`)}${rows.map((y) => svg`<path d="M1 ${y}H1188"/>`)}
        </g>
        <rect x=".500" y=".500" width="1188" height="668" stroke="#bdbdbd" />
      </svg>
      <h2>2035年国家治理现代化目标</h2>
      <ul>
        <li><mark>社会主义基本经济制度更加完善。</mark></li>
        <li><div>
          <span class="ln">（社会主义市场经济体制更加完善，公有制为主体、多种所有制经济共同发展，按劳分配</span>
          <span class="ln">为主体、多种分配方式长期并存；）、科技创新、科技创新能力；国家宏观调控机制更加</span>
          <span class="ln">成熟，国家发展规划战略导向作用更加精准，财政、货币、产业、区域等经济政策协调机</span>
          <span class="ln">制更加有效。权责清晰、财力协调、区域均衡的现代财政制度更加完善，规范透明、标准</span>
          <span class="ln">科学、约束有力的预算制度基本建成，<b>充分发挥中央和地方两个积极性的体制机制更加</b></span>
          <b class="ln">健全，科学界定各级财政事权和支出责任，构建权责清晰财力协调区域均衡的中央和地</b>
          <span class="ln"><b>方财政关系，健全地方税体系</b>。世界高水平的开放型较发达经济新体制基本建成。<b>使市</b></span>
          <b class="ln">场在资源配置中起决定性作用，更好地发挥政府作用，有为的有形政府之手与高效的无</b>
          <b class="ln">形市场之手合力作用更加凸显。</b>
        </div></li>
      </ul>
      <div class="callout">
        ${pic(392, 217, svg`<path d="M100 179 115 215 170 190A195 95.500 0 1 0 100 179z" fill="#fff100" stroke="#6a6a1a"/>`)}
        <p>中央与地方的关系/<br />政府与市场的关系</p>
      </div>
      <button class="timer" aria-label="计时器">00:00</button>
    </article>`;
  }

  private statusBar() {
    const views: [string, Pic][] = [["普通视图", I.viewNormal], ["幻灯片浏览", I.viewSorter], ["阅读视图", I.viewRead], ["幻灯片放映", I.viewShow]];
    return html`<footer class="status">
      <div class="side left">
        <span class="page">28 张，共 64 张</span>
        <button aria-label="拼写检查">${I.spell}</button>
        <button>中文(中国)</button>
        <button>${I.access}辅助功能: 调查</button>
      </div>
      <div class="side">
        <button class="cmd">${I.notes}备注</button>
        <button class="cmd">${I.comment}批注</button>
        ${views.map(([n, p], i) => html`<button class="view ${i === this.view ? "on" : ""}" aria-label=${n} @click=${() => (this.view = i)}>${p}</button>`)}
        <div class="zoom">
          <button aria-label="缩小">${pic(11, 12, svg`<path d="M0 5.500h11"/>`)}</button>
          <span class="rail"><input type="range" min="0" max="100" value="29" aria-label="缩放" /></span>
          <button aria-label="放大">${pic(11, 12, svg`<path d="M0 5.500h11M5.500 0v11"/>`)}</button>
        </div>
      </div>
    </footer>`;
  }

  private taskBar() {
    return html`<footer class="task">
      <button class="weather"><span>°C</span><span>快停了</span></button>
      <div class="apps">
        <button aria-label="开始菜单">${I.start}</button>
        <button aria-label="搜索">${I.search}</button>
        <button aria-label="任务视图">${I.tasks}</button>
        <button class="run" aria-label="Edge">${I.edge}</button>
        <button aria-label="文件资源管理器">${I.folder}</button>
        <button aria-label="微信">${I.wechat}</button>
        <button class="run now" aria-label="PowerPoint">${I.ppt}</button>
      </div>
      <div class="tray">
        <button class="b" aria-label="显示隐藏的图标">${I.up}</button>
        <button class="b" aria-label="录屏">${I.flower}</button>
        <button class="b" aria-label="安全">${I.shield}</button>
        <button class="wide" aria-label="麦克风">${I.mic}</button>
        <button class="ime">英</button>
        <button class="b" aria-label="网络">${I.wifi}</button>
        <button class="b" aria-label="音量">${I.mute}</button>
        <button class="b" aria-label="电池">${I.battery}</button>
        <button class="clock"><span>1</span><span>2022/</span></button>
      </div>
    </footer>`;
  }

  render() {
    return html`${this.titleBar()}${this.tabBar()}${this.ribbon()}
      <main class="work">
        <aside class="nav">
          ${this.thumbnails()}
          <div class="bar"><button aria-label="向上滚动">${tri(true)}</button><div class="grip"></div><div class="room"></div><button aria-label="向下滚动">${tri(false)}</button></div>
        </aside>
        <div class="main">
          <div class="stage">${this.slide()}</div>
          <div class="notes"><textarea aria-label="备注" placeholder="单击此处添加备注"></textarea></div>
        </div>
      </main>
      ${this.statusBar()}${this.taskBar()}`;
  }
}
